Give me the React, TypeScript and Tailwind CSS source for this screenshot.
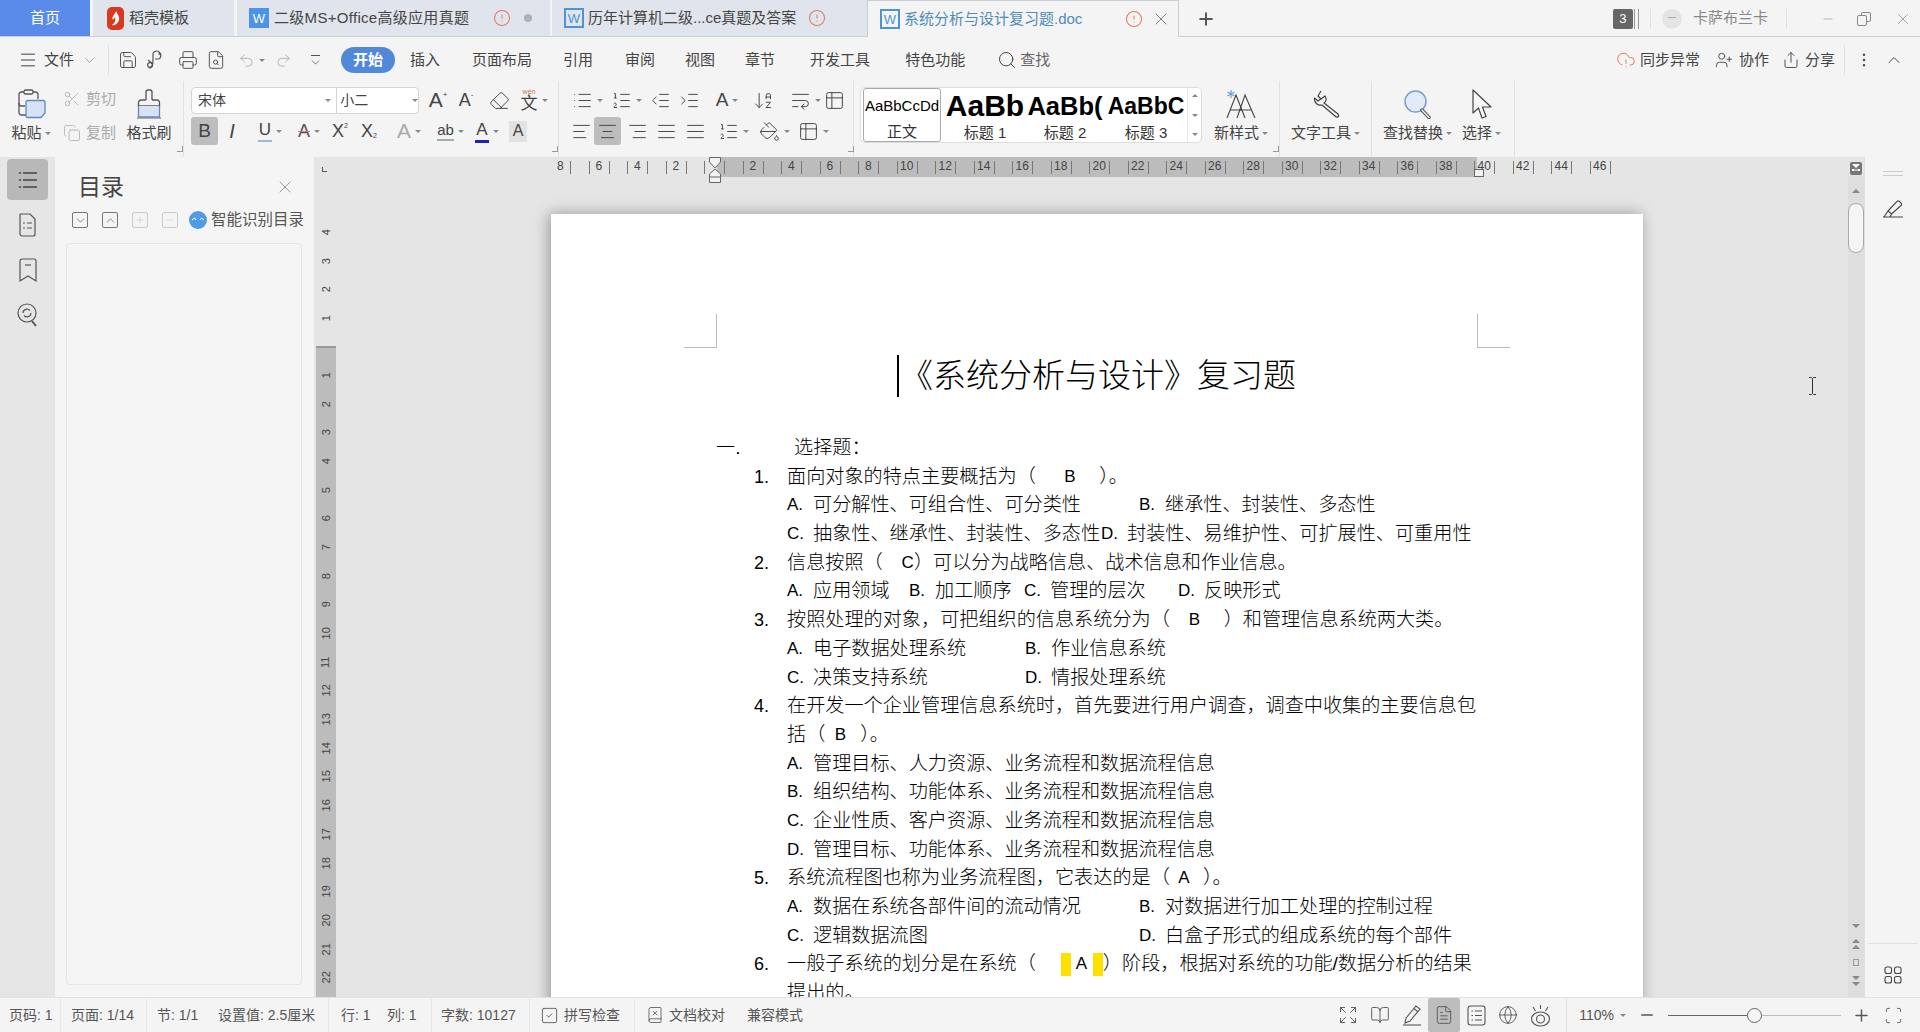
import React from 'react';
import {
  AlignCenter, AlignJustify, AlignLeft, AlignRight, ArrowDownAZ, BookOpen, ChevronDown, ChevronUp,
  CircleAlert, CloudAlert, Copy, EllipsisVertical, Eraser, Expand, FileSearch, FileText,
  Globe, IndentDecrease, IndentIncrease, List, ListOrdered, Menu, Minus,
  PaintBucket, Plus, Printer, Redo2, Save, Scan, Scissors, Search,
  Share, Table2, Undo2, UserPlus, X, BookX, WrapText, SquareCheck,
} from 'lucide-react';

const Caret = ({ className = '' }: { className?: string }) => (
  <span className={`inline-block h-0 w-0 border-x-[3px] border-t-[3px] border-x-transparent border-t-[#888] ${className}`} />
);

const Launcher = () => (
  <div className="ml-auto mt-auto mb-[5px] h-[6px] w-[6px] shrink-0 border-r border-b border-[#999]" />
);

const Sep = ({ className = '' }: { className?: string }) => <div className={`w-px shrink-0 bg-[#e2e2e2] ${className}`} />;

const WordIcon = ({ solid }: { solid?: boolean }) => (
  <span className={`flex h-[20px] w-[20px] shrink-0 items-center justify-center text-[13px] leading-none ${solid ? 'bg-[#4c94e6] text-white' : 'border-2 border-[#4c94d6] text-[#4c94d6]'}`}>W</span>
);

const Alert = () => <CircleAlert size={18} strokeWidth={1.4} className="shrink-0 text-[#e4785c]" />;

const PasteIcon = () => (
  <svg width="29" height="30" viewBox="0 0 29 30" fill="none" stroke="#555" strokeWidth="1.3">
    <path d="M8 17H4.5A2.5 2.5 0 0 1 2 14.5V5.5A2.5 2.5 0 0 1 4.5 3H7M16 3H18.5A2.5 2.5 0 0 1 21 5.5V10" />
    <path d="M2 14V23.5A2.5 2.5 0 0 0 4.5 26H9" />
    <rect x="7" y="1" width="9" height="4" rx="1.5" />
    <path d="M9 13.5A2 2 0 0 1 11 11.5H26A2 2 0 0 1 28 13.5V24L24 28.5H11A2 2 0 0 1 9 26.5Z" fill="#d7e3f5" stroke="#5f88c4" />
  </svg>
);

const BrushIcon = () => (
  <svg width="26" height="30" viewBox="0 0 26 30" fill="none" stroke="#555" strokeWidth="1.3">
    <path d="M10 11V3A2 2 0 0 1 12 1H14A2 2 0 0 1 16 3V11" />
    <path d="M10 11H5A2.5 2.5 0 0 0 2.5 13.5V17H23.5V13.5A2.5 2.5 0 0 0 21 11H16" />
    <path d="M2.5 17V28H23.5V17" fill="#d7e3f5" stroke="#5f88c4" />
    <path d="M1 29H25" stroke="#888" />
  </svg>
);

const NewStyleIcon = () => (
  <svg width="30" height="30" viewBox="0 0 30 30" fill="none" stroke="#444" strokeWidth="1.1">
    <path d="M1 29L10 6 19 29M4 21H16" />
    <path d="M11 29L19 6 29 29M14 21H26" />
    <path d="M5 1V9M1.5 3L8.5 7M8.5 3L1.5 7" stroke="#6f9bd4" />
  </svg>
);

const WrenchIcon = () => (
  <svg width="28" height="28" viewBox="0 0 28 28" fill="none" stroke="#444" strokeWidth="1.2" strokeLinejoin="round">
    <path d="M8 1L5 6 8 9 12 6C14 9 13 12 11 13L25 24C27 27 24 28 22 26L9 15C5 16 1 13 1.5 8L5 11 8.5 8.5" />
  </svg>
);

const FindIcon = () => (
  <svg width="28" height="29" viewBox="0 0 28 29" fill="none">
    <circle cx="11.5" cy="11.5" r="10.5" fill="#e3ebf7" stroke="#7d9ecf" strokeWidth="1.5" />
    <path d="M18 20L25 27.5" stroke="#555" strokeWidth="3.4" strokeLinecap="round" />
    <path d="M18 20L25 27.5" stroke="#f3f3f3" strokeWidth="1.4" strokeLinecap="round" />
  </svg>
);

const PointerIcon = () => (
  <svg width="20" height="30" viewBox="0 0 20 30" fill="#f8f8f8" stroke="#444" strokeWidth="1.2" strokeLinejoin="round">
    <path d="M1 1V24L6.5 19 10 29 14 27.5 10.5 18H19Z" />
  </svg>
);

const ProofIcon = () => (
  <svg width="19" height="20" viewBox="0 0 19 20" fill="none" stroke="#555" strokeWidth="1.2">
    <path d="M3 18C7 18 7 13 7 9V4C7 2 9 1 11 1C13 1 14 3 13 5" />
    <path d="M9 9H12C15 9 16 4 13 2" />
    <path d="M2 10L7 14" />
    <circle cx="4" cy="15" r="2.4" />
  </svg>
);

const StatusEye = () => (
  <svg width="21" height="23" viewBox="0 0 21 23" fill="none" stroke="#555" strokeWidth="1.1">
    <ellipse cx="10.5" cy="15" rx="9" ry="7" />
    <circle cx="10.5" cy="15" r="4" />
    <path d="M10.5 1V5M3 3L5.5 7M18 3L15.5 7" />
  </svg>
);

const PenLine = () => (
  <svg width="20" height="22" viewBox="0 0 20 22" fill="none" stroke="#555" strokeWidth="1.1">
    <path d="M4 14L14 2 18 5 8 17 3 19Z" />
    <path d="M12 4.5L16 8" />
    <path d="M1 21H19" />
  </svg>
);

const OutlineIcon = () => (
  <svg width="19" height="21" viewBox="0 0 19 21" fill="none" stroke="#555" strokeWidth="1.1">
    <rect x="1" y="1" width="17" height="19" rx="2.5" />
    <path d="M4.5 6H6M8 6H15M4.5 10.5H6M8 10.5H15M4.5 15H6M8 15H15" />
  </svg>
);

function TabBar() {
  return (
    <div className="flex h-[37px] shrink-0 border-b border-[#c8ced6] bg-[#f4f4f4] pt-[1px] text-[15px] text-[#444]">
      <div className="-mt-[1px] flex w-[90px] items-center justify-center bg-[#5b8bea] text-white">首页</div>
      <div className="-mt-[1px] ml-[3px] flex w-[141px] items-center bg-[#e0e5ed] pl-[14px]">
        <svg width="17" height="23" viewBox="0 0 17 23" className="shrink-0">
          <rect width="17" height="23" rx="5" fill="#d8391f" />
          <path d="M9.5 4 C10 8 13 9 12 13 C11 17 7 19 5 18 C8 16 9 13 8 10 C7 12 6 13 5.5 12 C5 9 8 7 9.5 4Z" fill="#fff" />
        </svg>
        <span className="ml-[5px]">稻壳模板</span>
      </div>
      <div className="-mt-[1px] ml-[3px] flex w-[313px] items-center bg-[#e0e5ed] pl-[12px]">
        <WordIcon solid />
        <span className="ml-[5px] w-[219px] whitespace-nowrap tracking-[0.3px]">二级MS+Office高级应用真题</span>
        <Alert />
        <span className="ml-[13px] h-[8px] w-[8px] rounded-full bg-[#a9b1bd]" />
      </div>
      <div className="-mt-[1px] ml-[2px] flex w-[315px] items-center bg-[#e0e5ed] pl-[12px]">
        <WordIcon />
        <span className="ml-[4px] w-[220px] whitespace-nowrap">历年计算机二级...ce真题及答案</span>
        <Alert />
      </div>
      <div className="-mt-[1px] flex h-[37px] w-[312px] items-center border-x border-t border-[#c8ced6] bg-[#f4f4f4] pl-[12px] text-[#4f8dbb]">
        <WordIcon />
        <span className="ml-[4px] w-[221px] whitespace-nowrap">系统分析与设计复习题.doc</span>
        <Alert />
        <X size={20} strokeWidth={1} className="ml-[8px] text-[#666]" />
      </div>
      <Plus size={20} strokeWidth={2.4} className="ml-[17px] self-center text-[#555]" />
      <div className="ml-auto flex items-center">
        <span className="flex h-[20px] w-[20px] items-center justify-center rounded-[2px] bg-[#666] text-[13px] text-white">3</span>
        <span className="ml-[1px] h-[20px] w-[5px] border-x border-[#999]" />
        <Sep className="ml-[11px] h-[20px]" />
        <span className="ml-[11px] flex h-[20px] w-[20px] items-center justify-center rounded-full bg-[#e4e4e4] text-[7px] text-[#666]">~~</span>
        <span className="ml-[11px] text-[#888]">卡萨布兰卡</span>
        <Sep className="ml-[18px] h-[20px]" />
        <Minus size={14} strokeWidth={1} className="ml-[34px] text-[#888]" />
        <span className="relative ml-[22px] h-[14px] w-[14px]">
          <span className="absolute right-0 top-0 h-[10px] w-[10px] rounded-[2px] border border-[#888]" />
          <span className="absolute bottom-0 left-0 h-[11px] w-[10px] rounded-[2px] border border-[#888] bg-[#f4f4f4]" />
        </span>
        <X size={18} strokeWidth={1} className="ml-[23px] mr-[8px] text-[#888]" />
      </div>
    </div>
  );
}

const menuItems: [string, string][] = [
  ['插入', 'ml-[15px]'], ['页面布局', 'ml-[32px]'], ['引用', 'ml-[31px]'], ['审阅', 'ml-[32px]'],
  ['视图', 'ml-[30px]'], ['章节', 'ml-[30px]'], ['开发工具', 'ml-[35px]'], ['特色功能', 'ml-[35px]'],
];

function MenuBar() {
  const qa = 'text-[#555]';
  return (
    <div className="flex h-[43px] shrink-0 items-center pt-[3px] text-[15px] text-[#444]">
      <Menu size={20} strokeWidth={1.2} className="ml-[18px]" />
      <span className="ml-[6px]">文件</span>
      <ChevronDown size={15} strokeWidth={1.1} className="ml-[8px] text-[#777]" />
      <Sep className="ml-[11px] h-[30px] bg-[#d4d4d4]" />
      <Save size={20} strokeWidth={1.2} className={`ml-[9px] ${qa}`} />
      <span className="ml-[8px]"><ProofIcon /></span>
      <Printer size={20} strokeWidth={1.2} className={`ml-[13px] ${qa}`} />
      <FileSearch size={20} strokeWidth={1.2} className={`ml-[8px] ${qa}`} />
      <Undo2 size={17} strokeWidth={1.2} className="ml-[12px] text-[#aaa]" />
      <Caret className="ml-[4px]" />
      <Redo2 size={17} strokeWidth={1.2} className="ml-[10px] text-[#aaa]" />
      <span className={`ml-[17px] mt-[3px] flex w-[13px] flex-col items-center ${qa}`}>
        <span className="h-px w-[9px] bg-[#555]" />
        <ChevronDown size={13} strokeWidth={1.4} />
      </span>
      <span className="ml-[19px] flex h-[26px] w-[54px] items-center justify-center rounded-full bg-[#5288da] font-bold text-white">开始</span>
      {menuItems.map(([label, gap]) => (
        <span key={label} className={gap}>{label}</span>
      ))}
      <Search size={20} strokeWidth={1.2} className="ml-[32px]" />
      <span className="ml-[3px] text-[#666]">查找</span>
      <div className="ml-auto flex items-center">
        <CloudAlert size={20} strokeWidth={1.2} className="text-[#e4785c]" />
        <span className="ml-[4px]">同步异常</span>
        <UserPlus size={18} strokeWidth={1.2} className="ml-[15px]" />
        <span className="ml-[6px]">协作</span>
        <Share size={18} strokeWidth={1.2} className="ml-[13px]" />
        <span className="ml-[5px]">分享</span>
        <Sep className="ml-[9px] h-[30px] bg-[#dcdcdc]" />
        <EllipsisVertical size={18} strokeWidth={1.4} className="ml-[10px]" />
        <ChevronUp size={20} strokeWidth={1.2} className="ml-[11px] mr-[16px]" />
      </div>
    </div>
  );
}

const Big = ({ icon, label, w, caret }: { icon: React.ReactNode; label: string; w: string; caret?: boolean }) => (
  <div className={`flex shrink-0 flex-col items-center ${w}`}>
    <div className="mt-[7px] flex h-[32px] items-center">{icon}</div>
    <div className="mt-[3px] flex items-center whitespace-nowrap leading-[20px]">
      {label}
      {caret && <Caret className="ml-[3px]" />}
    </div>
  </div>
);

const Slot = ({ w, children, active, caret }: { w: string; children: React.ReactNode; active?: boolean; caret?: boolean }) => (
  <div className={`flex h-[28px] shrink-0 items-center justify-center rounded-[3px] ${w} ${active ? 'bg-[#bdbdbd]' : ''}`}>
    {children}
    {caret && <Caret className="ml-[4px]" />}
  </div>
);

const ic = { size: 21, strokeWidth: 1.1 };

function StyleCard({ w, sample, size, label, bold, selected }: { w: string; sample: string; size: string; label: string; bold?: boolean; selected?: boolean }) {
  return (
    <div className={`flex h-[54px] shrink-0 flex-col items-center overflow-hidden ${w} ${selected ? 'rounded-[3px] border border-[#aaa]' : ''}`}>
      <div className={`flex h-[36px] items-center whitespace-nowrap text-black ${size} ${bold ? 'font-bold' : ''}`}>{sample}</div>
      <div className="whitespace-nowrap text-[15px] leading-[18px] text-[#333]">{label}</div>
    </div>
  );
}

function Toolbar() {
  return (
    <div className="flex h-[77px] shrink-0 pt-[1px] text-[15px] text-[#444]">
      <div className="flex w-[184px] shrink-0 border-r border-[#e2e2e2] pl-[10px]">
        <Big w="w-[42px]" label="粘贴" caret icon={<PasteIcon />} />
        <div className="ml-[11px] flex w-[56px] shrink-0 flex-col text-[#aaa]">
          <div className="mt-[2px] flex h-[32px] items-center"><Scissors size={18} strokeWidth={1} /><span className="ml-[5px]">剪切</span></div>
          <div className="mt-[2px] flex h-[32px] items-center"><Copy size={18} strokeWidth={1} /><span className="ml-[5px]">复制</span></div>
        </div>
        <Big w="w-[46px] ml-[7px]" label="格式刷" icon={<BrushIcon />} />
        <Launcher />
      </div>
      <div className="flex w-[375px] shrink-0 border-r border-[#e2e2e2] pl-[7px]">
        <div className="mt-[5px] flex w-[360px] shrink-0 flex-col">
          <div className="flex h-[28px] items-center">
            <div className="flex h-[27px] w-[228px] shrink-0 items-center rounded-[4px] border border-[#d4d4d4] bg-white text-[14px]">
              <span className="ml-[6px] w-[128px]">宋体</span>
              <Caret />
              <span className="ml-[5px] h-[27px] w-px bg-[#d4d4d4]" />
              <span className="ml-[3px] w-[72px]">小二</span>
              <Caret />
            </div>
            <Slot w="w-[28px] ml-[5px]"><span className="text-[21px] font-light">A</span><span className="mb-[10px] text-[8px]">+</span></Slot>
            <Slot w="w-[28px]"><span className="text-[18px] font-light">A</span><span className="mb-[10px] text-[8px]">-</span></Slot>
            <Slot w="w-[38px]"><Eraser {...ic} /></Slot>
            <Slot w="w-[32px]" caret><span className="flex flex-col items-center leading-none"><span className="text-[7px] text-[#c87a4c]">wén</span><span className="text-[17px]">文</span></span></Slot>
          </div>
          <div className="mt-[3px] flex items-center">
            <Slot w="w-[27px]" active><span className="text-[19px]">B</span></Slot>
            <Slot w="w-[28px]"><span className="text-[20px] font-light italic">I</span></Slot>
            <Slot w="w-[48px]" caret><span className="border-b-2 border-[#9fb8dc] px-[1px] text-[17px] leading-[20px]">U</span></Slot>
            <Slot w="w-[30px]" caret><span className="text-[18px] text-[#555] line-through decoration-[#c97f7f]">A</span></Slot>
            <Slot w="w-[32px]"><span className="text-[18px]">X</span><span className="mb-[10px] text-[7px]">2</span></Slot>
            <Slot w="w-[26px]"><span className="text-[18px]">X</span><span className="mt-[10px] text-[7px]">2</span></Slot>
            <Slot w="w-[54px]" caret><span className="text-[21px] font-light text-[#aaa]">A</span></Slot>
            <Slot w="w-[29px]" caret><span className="border-b-2 border-[#aaa] text-[15px] leading-[18px]">ab</span></Slot>
            <Slot w="w-[44px]" caret><span className="border-b-[3px] border-[#1f1fc8] px-[1px] text-[17px] leading-[20px]">A</span></Slot>
            <span className="flex h-[21px] w-[18px] items-center justify-center bg-[#e2e2e2] text-[16px]">A</span>
          </div>
        </div>
        <Launcher />
      </div>
      <div className="flex w-[295px] shrink-0 border-r border-[#e2e2e2] pl-[9px]">
        <div className="mt-[5px] flex w-[280px] shrink-0 flex-col">
          <div className="flex items-center">
            <Slot w="w-[38px]" caret><List {...ic} /></Slot>
            <Slot w="w-[40px]" caret><ListOrdered {...ic} /></Slot>
            <Slot w="w-[28px]"><IndentDecrease {...ic} /></Slot>
            <Slot w="w-[30px]"><IndentIncrease {...ic} /></Slot>
            <Slot w="w-[46px]" caret><span className="text-[19px] font-light">A</span></Slot>
            <Slot w="w-[26px]"><ArrowDownAZ {...ic} /></Slot>
            <Slot w="w-[42px] ml-[8px]" caret><WrapText {...ic} /></Slot>
            <Slot w="w-[16px]"><Table2 {...ic} className="shrink-0" /></Slot>
          </div>
          <div className="mt-[3px] flex items-center">
            <Slot w="w-[26px]"><AlignLeft {...ic} /></Slot>
            <Slot w="w-[27px]" active><AlignCenter {...ic} /></Slot>
            <Slot w="w-[32px]"><AlignRight {...ic} /></Slot>
            <Slot w="w-[26px]"><AlignJustify {...ic} /></Slot>
            <Slot w="w-[32px]"><AlignJustify {...ic} /></Slot>
            <Slot w="w-[44px]" caret><ListOrdered {...ic} /></Slot>
            <Slot w="w-[38px]" caret><PaintBucket {...ic} /></Slot>
            <Slot w="w-[40px]" caret><Table2 {...ic} /></Slot>
          </div>
        </div>
        <Launcher />
      </div>
      <div className="flex w-[426px] shrink-0 border-r border-[#e2e2e2] pl-[6px]">
        <div className="mt-[6px] flex h-[56px] w-[342px] shrink-0 items-center rounded-[5px] border border-[#ddd] bg-white pl-[2px]">
          <StyleCard selected w="w-[78px]" sample="AaBbCcDd" size="text-[15px]" label="正文" />
          <StyleCard w="w-[80px] ml-[4px]" sample="AaBb" size="text-[30px] leading-[36px]" bold label="标题 1" />
          <StyleCard w="w-[78px] ml-[1px]" sample="AaBb(" size="text-[25.5px]" bold label="标题 2" />
          <StyleCard w="w-[78px] ml-[3px]" sample="AaBbC" size="text-[23px]" bold label="标题 3" />
          <div className="ml-[2px] flex h-[54px] w-[14px] flex-col items-center justify-between border-l border-[#e8e8e8] py-[6px]">
            <Caret className="rotate-180" />
            <Caret />
            <Caret />
          </div>
        </div>
        <Big w="w-[52px] ml-[13px]" label="新样式" caret icon={<NewStyleIcon />} />
        <Launcher />
      </div>
      <div className="flex w-[92px] shrink-0 justify-center border-r border-[#e2e2e2]">
        <Big w="w-[70px]" label="文字工具" caret icon={<span className="ml-[3px] flex"><WrenchIcon /></span>} />
      </div>
      <div className="flex w-[143px] shrink-0 border-r border-[#e2e2e2] pl-[10px]">
        <Big w="w-[71px]" label="查找替换" caret icon={<FindIcon />} />
        <Big w="w-[37px] ml-[10px]" label="选择" caret icon={<PointerIcon />} />
      </div>
    </div>
  );
}

function LeftRail() {
  return (
    <div className="flex w-[55px] shrink-0 flex-col items-center bg-[#e6e6e6] pt-[2px]">
      <div className="flex h-[41px] w-[41px] items-center justify-center rounded-[4px] bg-[#b8b8b8]">
        <svg width="20" height="18" viewBox="0 0 20 18" fill="none" stroke="#444" strokeWidth="1.3">
          <path d="M1 2H3M5 2H19M1 9H3M5 9H19M1 16H3M5 16H19" />
        </svg>
      </div>
      <svg width="17" height="24" viewBox="0 0 17 24" fill="none" stroke="#555" strokeWidth="1.2" className="mt-[13px]">
        <path d="M2 1H11L16 6V21A2 2 0 0 1 14 23H3A2 2 0 0 1 1 21V2A1 1 0 0 1 2 1Z" />
        <path d="M4 10H6M8 10H13M4 15H6M8 15H13" />
      </svg>
      <svg width="18" height="25" viewBox="0 0 18 25" fill="none" stroke="#555" strokeWidth="1.2" className="mt-[21px]">
        <path d="M1 3A2 2 0 0 1 3 1H15A2 2 0 0 1 17 3V23L9 18 1 23Z" />
        <path d="M6 7H12" />
      </svg>
      <svg width="21" height="25" viewBox="0 0 21 25" fill="none" stroke="#555" strokeWidth="1.2" className="mt-[20px]">
        <circle cx="10" cy="10" r="9" />
        <path d="M15 18L19 23" strokeWidth="2" />
        <path d="M6 10A4 4 0 0 1 13 7.5M14 10A4 4 0 0 1 7 12.5" />
      </svg>
    </div>
  );
}

const MiniBtn = ({ children, dim }: { children: React.ReactNode; dim?: boolean }) => (
  <span className={`flex h-[16px] w-[16px] shrink-0 items-center justify-center rounded-[2px] border ${dim ? 'border-[#ccc] text-[#bbb]' : 'border-[#777] text-[#666]'}`}>{children}</span>
);

function TocPanel() {
  return (
    <div className="flex w-[259px] shrink-0 flex-col bg-[#f5f5f5] pl-[11px]">
      <div className="mt-[15px] flex items-center">
        <span className="ml-[12px] text-[23px] leading-[30px] text-[#444]">目录</span>
        <X size={20} strokeWidth={0.8} className="ml-[151px] text-[#666]" />
      </div>
      <div className="mt-[7px] flex h-[22px] items-center text-[15.5px] text-[#555]">
        <span className="ml-[6px] flex gap-[14px]">
          <MiniBtn><ChevronDown size={13} strokeWidth={1.4} /></MiniBtn>
          <MiniBtn><ChevronUp size={13} strokeWidth={1.4} /></MiniBtn>
          <MiniBtn dim><Plus size={10} strokeWidth={1.2} /></MiniBtn>
          <MiniBtn dim><Minus size={10} strokeWidth={1.2} /></MiniBtn>
        </span>
        <svg width="18" height="18" viewBox="0 0 18 18" className="ml-[11px] shrink-0">
          <circle cx="9" cy="9" r="9" fill="#4e9be8" />
          <path d="M3 9L5.5 7 7 9M11 9L12.5 7 15 9" stroke="#fff" fill="none" strokeWidth="1" />
        </svg>
        <span className="ml-[4px] whitespace-nowrap">智能识别目录</span>
      </div>
      <div className="mb-[12px] mt-[12px] w-[236px] flex-1 rounded-[4px] border border-[#e6e6e6]" />
    </div>
  );
}

const hNumbers = ['8', '6', '4', '2', '', '2', '4', '6', '8', '10', '12', '14', '16', '18', '20', '22', '24', '26', '28', '30', '32', '34', '36', '38', '40', '42', '44', '46'];
const vNumbersTop = ['4', '3', '2', '1'];
const vNumbers = Array.from({ length: 22 }, (_, i) => String(i + 1));

function HRuler() {
  return (
    <div className="relative flex h-[20px] shrink-0 items-center pl-[227px] text-[12px] text-[#444]">
      <span className="absolute left-[8px] top-[10px] h-[5px] w-[5px] border-b border-l border-[#555]" />
      <span className="absolute left-[403px] top-0 h-[20px] w-[760px] bg-[#bcbcbc]" />
      {hNumbers.map((n, i) => (
        <div key={i} className="relative flex w-[38.5px] shrink-0 items-center justify-center">
          {i > 0 && <span className="absolute left-[9px] h-[13px] w-px bg-[#777]" />}
          <span className="-mt-[2px]">{n}</span>
          <span className="absolute left-[29px] h-[13px] w-px bg-[#777]" />
        </div>
      ))}
      <svg width="12" height="26" viewBox="0 0 12 26" className="absolute left-[395px] top-0">
        <path d="M.5 .5H11.5V5L6 11 .5 5Z M6 12 11.5 17V25.5H.5V17Z M.5 20H11.5" fill="#f2f2f2" stroke="#666" />
      </svg>
      <span className="absolute left-[1160px] top-[12px] h-[8px] w-[10px] border border-[#666] bg-[#f2f2f2]" />
    </div>
  );
}

function VRuler() {
  return (
    <div className="ml-[2px] flex w-[20px] shrink-0 flex-col items-center text-[11px] text-[#444]">
      <div className="h-[41px] shrink-0" />
      {vNumbersTop.map((n) => (
        <span key={n} className="flex h-[28.7px] w-full shrink-0 items-center justify-center"><span className="-rotate-90">{n}</span></span>
      ))}
      <div className="h-[13px] shrink-0" />
      <div className="w-full flex-1 border-t-2 border-[#999] bg-[#bcbcbc] pt-[13px]">
        {vNumbers.map((n) => (
          <span key={n} className="flex h-[28.7px] w-full items-center justify-center"><span className="-rotate-90">{n}</span></span>
        ))}
      </div>
    </div>
  );
}

const Opt = ({ w, l, children }: { w: string; l: string; children: React.ReactNode }) => (
  <span className={`flex shrink-0 ${w}`}>
    <span className="w-[26px] shrink-0 font-['Liberation_Sans'] text-[17px]">{l}.</span>
    {children}
  </span>
);

const Line = ({ n, children }: { n?: string; children: React.ReactNode }) => (
  <div className="flex h-[28.7px] whitespace-pre leading-[28.7px]">
    <span className="ml-[38px] w-[33px] shrink-0 font-['Liberation_Sans'] text-[18px]">{n ? `${n}.` : ''}</span>
    {children}
  </div>
);

const La = ({ children }: { children: React.ReactNode }) => (
  <span className="font-['Liberation_Sans'] text-[17px]">{children}</span>
);

function Page() {
  return (
    <div className="relative ml-[215px] mt-[37px] h-[1500px] w-[1092px] shrink-0 bg-white pl-[165px] pt-[140px] text-[19.15px] font-light text-black shadow-[-2px_0_14px_rgba(0,0,0,0.35)]">
      <span className="absolute left-[133px] top-[100px] h-[34px] w-[33px] border-b border-r border-[#bbb]" />
      <span className="absolute left-[926px] top-[100px] h-[34px] w-[33px] border-b border-l border-[#bbb]" />
      <div className="flex h-[44px] w-[761px] items-center justify-center whitespace-nowrap text-[33px] leading-[44px]">
        <span className="mr-[1px] h-[42px] w-[2px] bg-black" />
        《系统分析与设计》复习题
      </div>
      <div className="mt-[36px] w-[761px]">
        <div className="flex h-[28.7px] leading-[28.7px]">
          <span className="w-[78px] shrink-0">一.</span>
          <span>选择题：</span>
        </div>
        <Line n="1">面向对象的特点主要概括为（<La>      B     </La>）。</Line>
        <Line>
          <Opt w="w-[352px]" l="A">可分解性、可组合性、可分类性</Opt>
          <Opt w="w-[300px]" l="B">继承性、封装性、多态性</Opt>
        </Line>
        <Line>
          <Opt w="w-[314px]" l="C">抽象性、继承性、封装性、多态性</Opt>
          <Opt w="w-[400px]" l="D">封装性、易维护性、可扩展性、可重用性</Opt>
        </Line>
        <Line n="2">信息按照（<La>    C</La>）可以分为战略信息、战术信息和作业信息。</Line>
        <Line>
          <Opt w="w-[122px]" l="A">应用领域</Opt>
          <Opt w="w-[115px]" l="B">加工顺序</Opt>
          <Opt w="w-[154px]" l="C">管理的层次</Opt>
          <Opt w="w-[120px]" l="D">反映形式</Opt>
        </Line>
        <Line n="3">按照处理的对象，可把组织的信息系统分为（<La>    B     </La>）和管理信息系统两大类。</Line>
        <Line>
          <Opt w="w-[238px]" l="A">电子数据处理系统</Opt>
          <Opt w="w-[200px]" l="B">作业信息系统</Opt>
        </Line>
        <Line>
          <Opt w="w-[238px]" l="C">决策支持系统</Opt>
          <Opt w="w-[200px]" l="D">情报处理系统</Opt>
        </Line>
        <Line n="4">在开发一个企业管理信息系统时，首先要进行用户调查，调查中收集的主要信息包</Line>
        <Line>括（<La>  B   </La>）。</Line>
        <Line><Opt w="w-[500px]" l="A">管理目标、人力资源、业务流程和数据流程信息</Opt></Line>
        <Line><Opt w="w-[500px]" l="B">组织结构、功能体系、业务流程和数据流程信息</Opt></Line>
        <Line><Opt w="w-[500px]" l="C">企业性质、客户资源、业务流程和数据流程信息</Opt></Line>
        <Line><Opt w="w-[500px]" l="D">管理目标、功能体系、业务流程和数据流程信息</Opt></Line>
        <Line n="5">系统流程图也称为业务流程图，它表达的是（<La>  A   </La>）。</Line>
        <Line>
          <Opt w="w-[352px]" l="A">数据在系统各部件间的流动情况</Opt>
          <Opt w="w-[300px]" l="B">对数据进行加工处理的控制过程</Opt>
        </Line>
        <Line>
          <Opt w="w-[352px]" l="C">逻辑数据流图</Opt>
          <Opt w="w-[320px]" l="D">白盒子形式的组成系统的每个部件</Opt>
        </Line>
        <Line n="6">
          一般子系统的划分是在系统（
          <span className="w-[25px] shrink-0" />
          <span className="my-[3px] w-[10px] shrink-0 bg-[#ffe000]" />
          <span className="w-[22px] shrink-0 pl-[5px] font-['Liberation_Sans'] text-[17px]">A</span>
          <span className="my-[3px] w-[10px] shrink-0 bg-[#ffe000]" />
          ）阶段，根据对系统的功能/数据分析的结果
        </Line>
        <Line>提出的。</Line>
      </div>
    </div>
  );
}

function DocArea() {
  return (
    <div className="flex min-w-0 flex-1 flex-col overflow-hidden bg-[#e5e5e5]">
      <HRuler />
      <div className="flex min-h-0 flex-1 overflow-hidden">
        <VRuler />
        <Page />
      </div>
    </div>
  );
}

const DoubleArrow = ({ up }: { up?: boolean }) => (
  <span className="flex flex-col items-center gap-[2px]">
    <Caret className={`border-x-[4px] border-t-[4px] ${up ? 'rotate-180' : ''}`} />
    <Caret className={`border-x-[4px] border-t-[4px] ${up ? 'rotate-180' : ''}`} />
  </span>
);

function ScrollBar() {
  return (
    <div className="flex w-[16px] shrink-0 flex-col items-center bg-[#dedede] text-[#777]">
      <div className="flex h-[18px] w-full items-end justify-center bg-[#e5e5e5]">
        <span className="flex h-[13px] w-[12px] flex-col items-center rounded-[2px] bg-[#777] pt-[2px]">
          <Caret className="border-x-[4px] border-t-[4px] border-t-white" />
          <span className="mt-[1px] h-[2px] w-[8px] border-x-2 border-white bg-white/50" />
        </span>
      </div>
      <Caret className="mt-[14px] rotate-180 border-x-[4px] border-t-[4px]" />
      <div className="mt-[10px] h-[50px] w-[16px] rounded-full border border-[#aaa] bg-[#f5f5f5]" />
      <div className="flex-1" />
      <Caret className="border-x-[4px] border-t-[4px]" />
      <span className="mt-[11px]"><DoubleArrow up /></span>
      <span className="mt-[10px] h-[7px] w-[6px] border border-[#999]" />
      <span className="mb-[11px] mt-[10px]"><DoubleArrow /></span>
    </div>
  );
}

function SidePanel() {
  return (
    <div className="flex w-[56px] shrink-0 flex-col items-center border-l border-[#e0e0e0] bg-[#f4f4f4]">
      <span className="mt-[14px] h-[5px] w-[20px] border-y border-[#ccc]" />
      <svg width="20" height="18" viewBox="0 0 20 18" fill="none" stroke="#444" strokeWidth="1.1" className="mt-[24px]">
        <path d="M5 11L14 1.5A1.6 1.6 0 0 1 16.5 1.5L18 3A1.6 1.6 0 0 1 18 5.5L8.5 14Z" />
        <path d="M5 11L1 17M8.5 14L7 17M0 17H20" />
      </svg>
      <div className="flex-1" />
      <div className="w-[50px] border-t border-[#e0e0e0]" />
      <svg width="18" height="18" viewBox="0 0 18 18" fill="none" stroke="#444" strokeWidth="1.1" className="mb-[13px] mt-[22px]">
        <rect x="1" y="1" width="6.5" height="6.5" rx="2" />
        <rect x="10.5" y="1" width="6.5" height="6.5" rx="2" />
        <rect x="1" y="10.5" width="6.5" height="6.5" rx="2" />
        <rect x="10.5" y="10.5" width="6.5" height="6.5" rx="2" />
      </svg>
    </div>
  );
}

const StatusCell = ({ w, children }: { w: string; children: React.ReactNode }) => (
  <div className={`flex h-full shrink-0 items-center whitespace-nowrap ${w}`}>{children}</div>
);

const StatusIcon = ({ children, active }: { children: React.ReactNode; active?: boolean }) => (
  <span className={`flex h-full w-[32px] shrink-0 items-center justify-center rounded-[2px] ${active ? 'bg-[#bdbdbd]' : ''}`}>{children}</span>
);

function StatusBar() {
  const st = { size: 20, strokeWidth: 1.1 };
  return (
    <div className="flex h-[35px] shrink-0 items-center border-t border-[#e2e2e2] bg-[#f4f4f4] text-[14px] text-[#555]">
      <StatusCell w="w-[61px] pl-[9px] border-r border-[#e8e8e8]">页码: 1</StatusCell>
      <StatusCell w="w-[86px] pl-[10px] border-r border-[#e8e8e8]">页面: 1/14</StatusCell>
      <StatusCell w="w-[71px] pl-[10px]">节: 1/1</StatusCell>
      <StatusCell w="w-[111px] border-r border-[#e8e8e8]">设置值: 2.5厘米</StatusCell>
      <StatusCell w="w-[58px] pl-[12px]">行: 1</StatusCell>
      <StatusCell w="w-[45px] border-r border-[#e8e8e8]">列: 1</StatusCell>
      <StatusCell w="w-[98px] pl-[9px] border-r border-[#e8e8e8]">字数: 10127</StatusCell>
      <StatusCell w="w-[105px] pl-[10px] border-r border-[#e8e8e8]">
        <SquareCheck size={19} strokeWidth={1.1} /><span className="ml-[5px]">拼写检查</span>
      </StatusCell>
      <StatusCell w="w-[112px] pl-[11px]">
        <BookX size={18} strokeWidth={1.1} /><span className="ml-[5px]">文档校对</span>
      </StatusCell>
      <StatusCell w="w-[80px]">兼容模式</StatusCell>
      <div className="ml-auto flex h-full items-center">
        <StatusIcon><Expand {...st} /></StatusIcon>
        <StatusIcon><BookOpen {...st} /></StatusIcon>
        <StatusIcon><PenLine /></StatusIcon>
        <StatusIcon active><FileText {...st} /></StatusIcon>
        <StatusIcon><OutlineIcon /></StatusIcon>
        <StatusIcon><Globe {...st} /></StatusIcon>
        <StatusIcon><StatusEye /></StatusIcon>
        <Sep className="ml-[10px] h-full" />
        <span className="ml-[12px]">110%</span>
        <Caret className="ml-[6px]" />
        <Minus size={18} strokeWidth={2} className="ml-[12px]" />
        <div className="ml-[12px] flex w-[173px] items-center">
          <span className="h-px w-[79px] bg-[#666]" />
          <span className="h-[15px] w-[15px] shrink-0 rounded-full border border-[#666] bg-[#f4f4f4]" />
          <span className="h-px flex-1 bg-[#bbb]" />
        </div>
        <Plus size={19} strokeWidth={1.8} className="ml-[11px]" />
        <Scan size={19} strokeWidth={1.1} className="ml-[13px] mr-[17px]" />
      </div>
    </div>
  );
}

export default function App() {
  return (
    <div className="flex h-[1032px] w-[1920px] flex-col overflow-hidden bg-[#f4f4f4] font-['Liberation_Sans','Noto_Sans_CJK_SC',sans-serif]">
      <TabBar />
      <MenuBar />
      <Toolbar />
      <div className="relative flex min-h-0 flex-1">
        <LeftRail />
        <TocPanel />
        <DocArea />
        <ScrollBar />
        <SidePanel />
        <svg width="9" height="18" viewBox="0 0 9 18" fill="none" stroke="#333" className="absolute left-[1808px] top-[220px]">
          <path d="M1 .5H3.5L4.5 1.5 5.5 .5H8M4.5 1.5V16.5M1 17.5H3.5L4.5 16.5 5.5 17.5H8" />
        </svg>
      </div>
      <StatusBar />
    </div>
  );
}
